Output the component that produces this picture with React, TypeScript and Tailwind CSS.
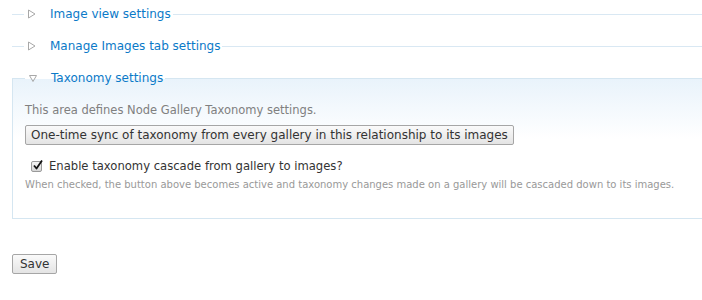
import React, { useState } from 'react';

const font = { fontFamily: '"DejaVu Sans", Verdana, sans-serif' };

const Arrow: React.FC<{ open: boolean }> = ({ open }) => (
    <svg width="8" height="8" viewBox="0 0 8 8" className="shrink-0 overflow-visible">
        {open ? (
            <path d="M0.5 1.5 L7.5 1.5 L4 7.5 Z" fill="none" stroke="#a8a8a8" strokeWidth="1" />
        ) : (
            <path d="M0.5 0 L0.5 8 L7 4 Z" fill="none" stroke="#a8a8a8" strokeWidth="1" />
        )}
    </svg>
);

const Legend: React.FC<{ title: string; open: boolean; onClick: () => void; inset?: boolean }> = ({ title, open, onClick, inset = true }) => (
    <legend className={`${inset ? 'ml-3' : 'ml-0'} pl-1 pr-0.5`}>
        <a href="#" onClick={e => { e.preventDefault(); onClick(); }} className="flex items-center gap-[14px] text-[12px] text-[#0b7ac8] leading-[16px]">
            <Arrow open={open} />
            <span>{title}</span>
        </a>
    </legend>
);

const Checkbox: React.FC<{ checked: boolean; onChange: (v: boolean) => void }> = ({ checked, onChange }) => (
    <span
        role="checkbox"
        aria-checked={checked}
        onClick={() => onChange(!checked)}
        className="relative w-[11px] h-[11px] shrink-0 border border-[#9a9a9a] rounded-[2px] bg-gradient-to-b from-[#f4f4f4] to-[#d6d6d6] cursor-pointer"
    >
        {checked && (
            <svg width="12" height="12" viewBox="0 0 12 12" className="absolute -top-[3px] left-[0px] overflow-visible">
                <path d="M2 6.5 L4.5 9.5 L10 1.5" fill="none" stroke="#111" strokeWidth="1.8" strokeLinejoin="round" />
            </svg>
        )}
    </span>
);

export default function App() {
    const [open, setOpen] = useState<Record<string, boolean>>({ view: false, manage: false, tax: true });
    const [cascade, setCascade] = useState(true);
    const toggle = (k: string) => setOpen(o => ({ ...o, [k]: !o[k] }));

    return (
        <div className="bg-white min-h-screen pl-3 pt-[6px]" style={font}>
            <fieldset className="border-0 border-t border-[#d9e8f3] mb-[16px] min-w-0">
                <Legend title="Image view settings" open={open.view} onClick={() => toggle('view')} />
            </fieldset>
            <fieldset className="border-0 border-t border-[#d9e8f3] mb-[16px] min-w-0">
                <Legend title="Manage Images tab settings" open={open.manage} onClick={() => toggle('manage')} />
            </fieldset>
            <fieldset className="border border-r-0 border-[#d5e6f1] min-w-0 bg-gradient-to-b from-[#e9f3fb] to-white to-[60px] px-3 pb-[27px]">
                <Legend title="Taxonomy settings" open={open.tax} onClick={() => toggle('tax')} inset={false} />
                <p className="text-[11.5px] text-[#808080] mt-[17px] leading-[14px]">This area defines Node Gallery Taxonomy settings.</p>
                <button className="mt-[8px] h-[20px] px-[5px] text-[12px] text-[#333] bg-gradient-to-b from-[#fafafa] to-[#e4e4e4] border border-[#a6a6a6] rounded-[2px] leading-none">
                    One-time sync of taxonomy from every gallery in this relationship to its images
                </button>
                <label className="flex items-center gap-[7px] mt-[12px] ml-[6px] text-[11.6px] text-[#333] leading-[16px]">
                    <Checkbox checked={cascade} onChange={setCascade} />
                    Enable taxonomy cascade from gallery to images?
                </label>
                <p className="text-[10px] text-[#999] mt-[4px] leading-[13px]">When checked, the button above becomes active and taxonomy changes made on a gallery will be cascaded down to its images.</p>
            </fieldset>
            <button className="mt-[35px] h-[20px] px-[7px] text-[12px] text-[#333] bg-gradient-to-b from-[#fafafa] to-[#e4e4e4] border border-[#a6a6a6] rounded-[2px] leading-none">
                Save
            </button>
        </div>
    );
}
